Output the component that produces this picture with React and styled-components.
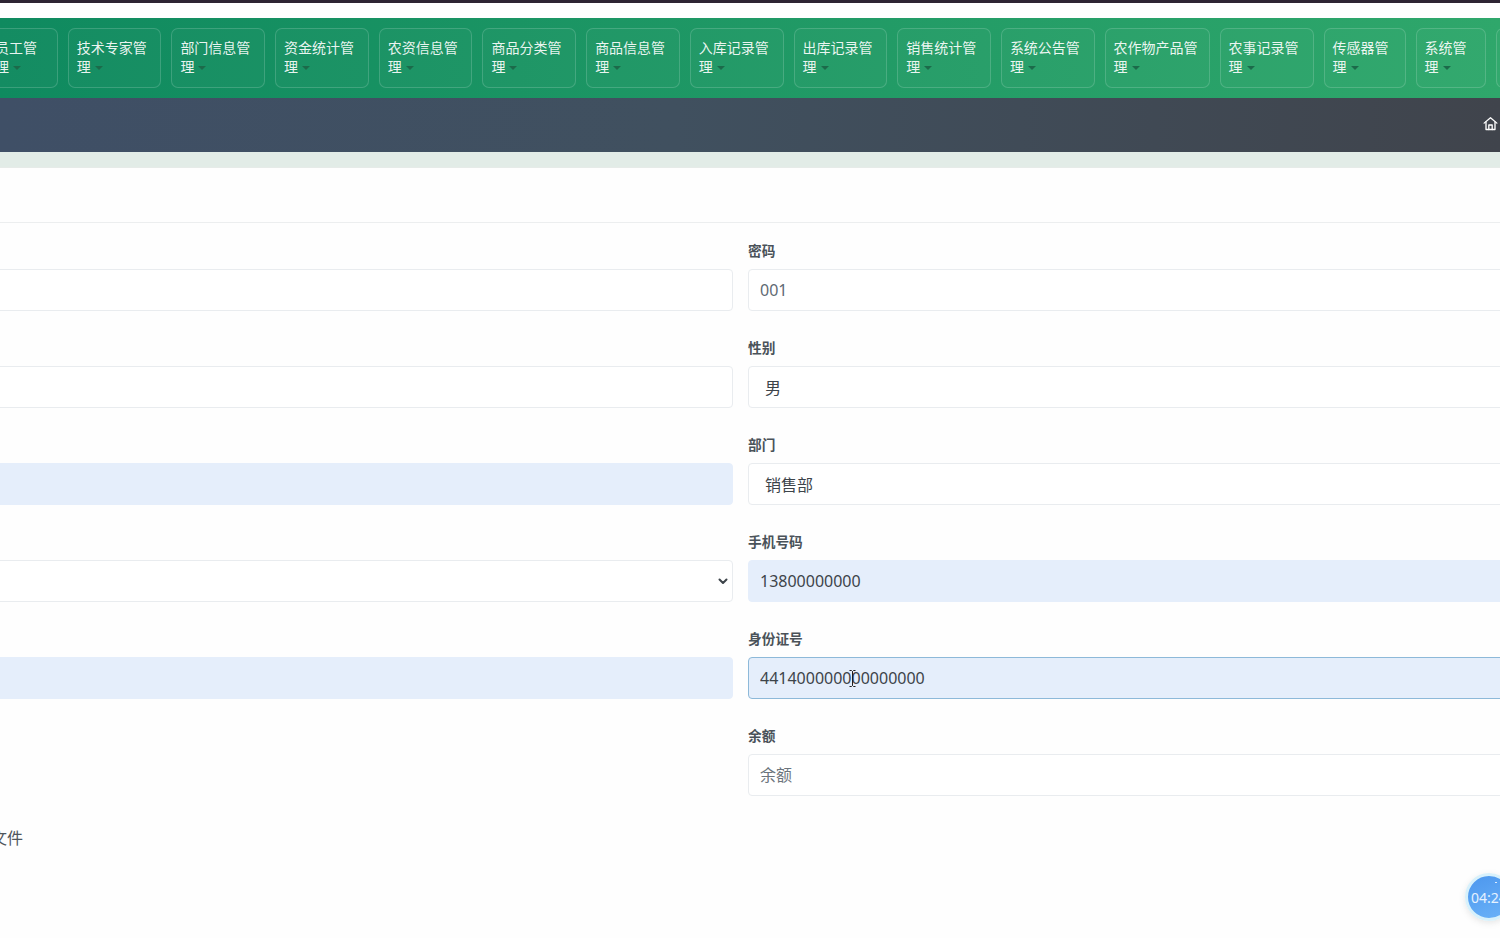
import React from "react";
import styled, { createGlobalStyle } from "styled-components";

const FONT = '"Noto Sans", "Open Sans", "Noto Sans CJK SC", sans-serif';

const GlobalStyle = createGlobalStyle`
  html, body {
    margin: 0;
    padding: 0;
    background: #fefefe;
    overflow: hidden;
  }
  * {
    box-sizing: border-box;
  }
`;

const Page = styled.div`
  position: relative;
  width: 1500px;
  height: 938px;
  overflow: hidden;
  font-family: ${FONT};
  background: #fefefe;
`;

const TopStrip = styled.div`
  height: 3px;
  background: #2d2433;
`;

const NavBar = styled.nav`
  margin-top: 15px;
  height: 80px;
  padding: 10px 0 10px 0;
  display: flex;
  gap: 10px;
  background: linear-gradient(90deg, #0f8a5f 0%, #2fa76b 100%);
  overflow: hidden;
`;

const NavRow = styled.div`
  display: flex;
  gap: 10px;
  margin-left: -14px;
`;

const NavItem = styled.a`
  flex: none;
  display: block;
  width: ${(p) => p.$w}px;
  height: 60px;
  padding: 9px 8px;
  border: 1px solid rgba(255, 255, 255, 0.16);
  border-radius: 7px;
  background: rgba(255, 255, 255, 0.025);
  color: rgba(255, 255, 255, 0.92);
  font-size: 14px;
  line-height: 19px;
  font-weight: 400;
  word-break: break-all;
`;

const Caret = styled.span`
  display: inline-block;
  margin-left: 4px;
  vertical-align: 2px;
  border-top: 4px solid #1c6a4a;
  border-left: 4px solid transparent;
  border-right: 4px solid transparent;
`;

const Crumbs = styled.div`
  height: 54px;
  padding-left: 1483px;
  display: flex;
  align-items: center;
  background: linear-gradient(90deg, #3f4f66 0%, #40505f 45%, #40444c 100%);
`;

const HomeIcon = styled.svg`
  width: 15px;
  height: 15px;
  flex: none;
  margin-top: -3px;
`;

const Band = styled.div`
  height: 16px;
  background: #e2ece7;
  border-bottom: 1px solid #e6ebe8;
`;

const CardHead = styled.div`
  height: 55px;
  border-bottom: 1px solid #eceeef;
`;

const FormGrid = styled.form`
  display: grid;
  grid-template-columns: 800px 800px;
  column-gap: 15px;
  row-gap: 27px;
  margin-left: -67px;
  padding-top: 18px;
`;

const Field = styled.div`
  position: relative;
  height: 70px;
`;

const Label = styled.label`
  display: block;
  height: 20px;
  margin-bottom: 8px;
  color: #4a5259;
  font-size: 13.7px;
  line-height: 20px;
  font-weight: 700;
`;

const Input = styled.input`
  display: block;
  width: 100%;
  height: 42px;
  padding: 0 11px 0 ${(p) => (p.$select ? "16px" : "11px")};
  border: 1px solid ${(p) => (p.$focus ? "#8db9d9" : p.$filled ? "#e5eefb" : "#e9ecef")};
  border-radius: 4px;
  outline: none;
  background: ${(p) => (p.$filled ? "#e5eefb" : "#ffffff")};
  color: ${(p) => (p.$muted ? "#5f6a73" : "#3d444a")};
  font-family: ${FONT};
  font-size: 16px;

  &::placeholder {
    color: #6c757d;
    opacity: 1;
  }
`;

const Chevron = styled.svg`
  position: absolute;
  right: 5px;
  bottom: 16px;
  width: 10px;
  height: 10px;
`;

const TextCursor = styled.svg`
  position: absolute;
  left: 99px;
  bottom: 11px;
  width: 11px;
  height: 19px;
`;

const FileHint = styled.div`
  height: 30px;
  padding-left: 10px;
  color: #4f565c;
  font-size: 16px;
  line-height: 30px;
`;

const Timer = styled.div`
  position: absolute;
  left: 1465px;
  top: 873px;
  width: 48px;
  height: 48px;
  display: flex;
  align-items: center;
  justify-content: center;
  border: 3px solid #d8f1fb;
  border-radius: 50%;
  background: linear-gradient(160deg, #4d97ee 0%, #6ab2f8 100%);
  box-shadow: 0 2px 6px rgba(120, 120, 120, 0.18);
  color: #e6f2ff;
  font-size: 14px;
  white-space: nowrap;

  &::after {
    content: "";
    position: absolute;
    left: 27px;
    top: 6px;
    width: 2px;
    height: 1px;
    background: #dcecff;
    box-shadow: 5px 1px 0 #dcecff;
  }
`;

const NAV = [
  ["员工管", 71.7],
  ["技术专家管", 93.7],
  ["部门信息管", 93.7],
  ["资金统计管", 93.7],
  ["农资信息管", 93.7],
  ["商品分类管", 93.7],
  ["商品信息管", 93.7],
  ["入库记录管", 93.7],
  ["出库记录管", 93.7],
  ["销售统计管", 93.7],
  ["系统公告管", 93.7],
  ["农作物产品管", 105],
  ["农事记录管", 94],
  ["传感器管", 82],
  ["系统管", 70],
];

const FIELDS = [
  { left: {}, right: { label: "密码", value: "001", muted: true } },
  { left: {}, right: { label: "性别", value: "男", select: true } },
  { left: { filled: true }, right: { label: "部门", value: "销售部", select: true } },
  { left: { chevron: true }, right: { label: "手机号码", value: "13800000000", filled: true } },
  { left: { filled: true }, right: { label: "身份证号", value: "441400000000000000", filled: true, focus: true } },
];

function FormField({ label, value, filled, muted, select, focus, chevron, placeholder }) {
  return (
    <Field>
      <Label>{label || "\u00a0"}</Label>
      <Input
        readOnly
        value={value}
        placeholder={placeholder}
        $filled={filled}
        $muted={muted}
        $select={select}
        $focus={focus}
      />
      {chevron && (
        <Chevron viewBox="0 0 10 10" fill="none" stroke="#3d444a" strokeWidth="2" strokeLinecap="round" strokeLinejoin="round">
          <path d="M1.5 3.5 5 7l3.5-3.5" />
        </Chevron>
      )}
      {focus && (
        <TextCursor viewBox="0 0 11 19" fill="none" stroke="#1f1f1f" strokeWidth="1">
          <path d="M2.5 1.5h2l1 1 1-1h2M5.5 2.5v14M2.5 17.5h2l1-1 1 1h2" />
        </TextCursor>
      )}
    </Field>
  );
}

export default function App() {
  return (
    <Page>
      <GlobalStyle />
      <TopStrip />
      <NavBar>
        <NavRow>
          {NAV.map(([text, w]) => (
            <NavItem key={text} $w={w}>
              {text}
              <br />理<Caret />
            </NavItem>
          ))}
          <NavItem $w={90} />
        </NavRow>
      </NavBar>
      <Crumbs>
        <HomeIcon viewBox="0 0 16 16" fill="none" stroke="#ffffff" strokeWidth="1.4" strokeLinejoin="round" strokeLinecap="round">
          <path d="M1.2 7.6 8 1.8l6.8 5.8" />
          <path d="M3.2 6.4v8h9.6v-8" />
          <path d="M6.2 14.4V9.6h3.6v4.8" />
        </HomeIcon>
      </Crumbs>
      <Band />
      <CardHead />
      <FormGrid>
        {FIELDS.map((row) => (
          <React.Fragment key={row.right.label}>
            <FormField {...row.left} />
            <FormField {...row.right} />
          </React.Fragment>
        ))}
        <Field />
        <FormField label="余额" placeholder="余额" />
        <FileHint>未选择文件</FileHint>
      </FormGrid>
      <Timer>04:24</Timer>
    </Page>
  );
}
